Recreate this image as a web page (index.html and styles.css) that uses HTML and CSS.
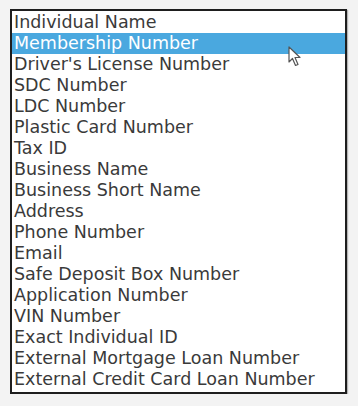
FILE: index.html
```html
<!DOCTYPE html>
<html>
<head>
<meta charset="utf-8">
<link rel="stylesheet" href="styles.css">
</head>
<body>
<div class="listbox">
  <div class="item">Individual Name</div>
  <div class="item selected">Membership Number
    <svg class="cursor" width="16" height="22" viewBox="0 0 16 22"><path d="M1 1 L1 16 L4.5 12.5 L7.5 19.5 L10 18.5 L7 11.5 L12 11.5 Z" fill="#fff" stroke="#555" stroke-width="1.2" stroke-linejoin="round"/></svg>
  </div>
  <div class="item">Driver's License Number</div>
  <div class="item">SDC Number</div>
  <div class="item">LDC Number</div>
  <div class="item">Plastic Card Number</div>
  <div class="item">Tax ID</div>
  <div class="item">Business Name</div>
  <div class="item">Business Short Name</div>
  <div class="item">Address</div>
  <div class="item">Phone Number</div>
  <div class="item">Email</div>
  <div class="item">Safe Deposit Box Number</div>
  <div class="item">Application Number</div>
  <div class="item">VIN Number</div>
  <div class="item">Exact Individual ID</div>
  <div class="item">External Mortgage Loan Number</div>
  <div class="item">External Credit Card Loan Number</div>
</div>
</body>
</html>
```
FILE: styles.css
```css
html, body {
  margin: 0;
  padding: 0;
  background: #f3f3f3;
}
body {
  padding: 9px 0 0 10px;
}
.listbox {
  width: 333px;
  border: 2px solid #1e1e1e;
  background: #fff;
  box-shadow: 1px 1px 1px rgba(0,0,0,0.25);
  padding: 1px 0 2px 0;
  font-family: "DejaVu Sans", Verdana, sans-serif;
  font-size: 17.5px;
  color: #3a3a3a;
}
.item {
  height: 21px;
  line-height: 21px;
  padding-left: 2px;
  white-space: nowrap;
  position: relative;
}
.item.selected {
  background: #4aa8df;
  color: #fff;
}
.cursor {
  position: absolute;
  left: 276px;
  top: 13px;
}
```
